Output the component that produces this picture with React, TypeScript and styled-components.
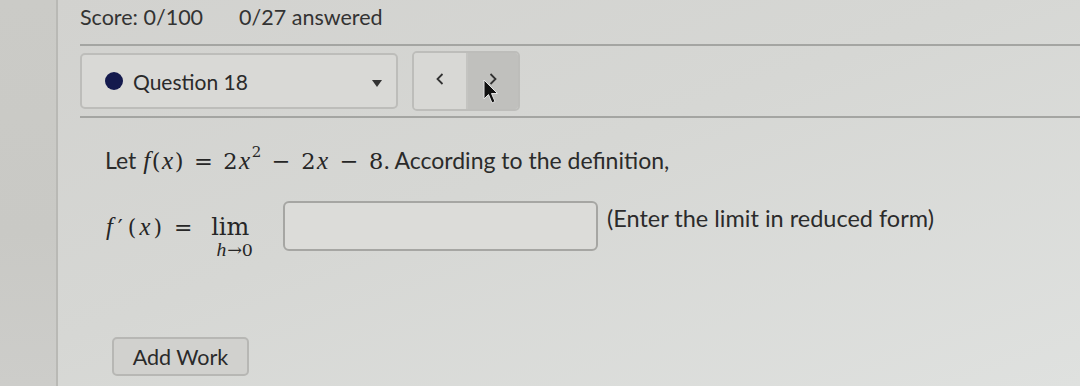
import styled, { createGlobalStyle } from 'styled-components'

const GlobalStyle = createGlobalStyle`
  html, body {
    margin: 0;
    padding: 0;
    height: 100%;
  }
  body {
    font-family: Lato, 'Open Sans', sans-serif;
    color: #2b2b2b;
    background: #c7c7c3;
    overflow: hidden;
  }
  #root {
    height: 100%;
  }
`

const Page = styled.div`
  display: flex;
  width: 1080px;
  height: 386px;
`

const Rail = styled.div`
  width: 56px;
  flex-shrink: 0;
  background: linear-gradient(180deg, #cbcbc7 0%, #c9c9c5 60%, #cdcdca 100%);
  border-right: 2px solid #b9b9b5;
`

const Main = styled.main`
  position: relative;
  flex: 1;
  padding: 4px 0 0 22px;
  background: linear-gradient(160deg, #d2d2cf 0%, #d6d7d4 45%, #dfe1df 100%);
`

const ScoreBar = styled.div`
  display: flex;
  gap: 36px;
  font-size: 21.5px;
  line-height: 26px;
  color: #333;
`

const Rule = styled.hr<{ $top: number }>`
  margin: ${(p) => p.$top}px 0 0;
  border: 0;
  border-top: 2px solid #a4a5a2;
  height: 0;
`

const NavRow = styled.div`
  display: flex;
  align-items: center;
  gap: 14px;
  margin-top: 5px;
`

const Select = styled.div`
  display: flex;
  align-items: center;
  box-sizing: border-box;
  width: 318px;
  height: 56px;
  padding: 0 14px 0 23px;
  border: 2px solid #bdbdba;
  border-radius: 5px;
  background: #d9d9d6;
  font-size: 21px;
`

const Dot = styled.span`
  width: 18px;
  height: 18px;
  border-radius: 50%;
  background: #141a4d;
  margin-right: 10px;
`

const SelectLabel = styled.span`
  flex: 1;
  color: #2a2a2a;
`

const Caret = styled.span`
  width: 0;
  height: 0;
  border-left: 5px solid transparent;
  border-right: 5px solid transparent;
  border-top: 7px solid #333;
  margin-top: 4px;
`

const NavGroup = styled.div`
  display: flex;
  height: 56px;
  border: 2px solid #bdbdba;
  border-radius: 5px;
  overflow: hidden;
`

const NavButton = styled.button<{ $hover?: boolean }>`
  width: 52px;
  height: 100%;
  border: 0;
  padding: 0 0 4px;
  display: flex;
  align-items: center;
  justify-content: center;
  background: ${(p) => (p.$hover ? '#c0c0bd' : '#d8d8d5')};
  & + & {
    border-left: 2px solid #c4c4c1;
  }
`

const Question = styled.section`
  padding: 26px 0 0 25px;
  font-size: 23px;
`

const Line = styled.p`
  margin: 0;
  line-height: 32px;
  display: flex;
  align-items: baseline;
  white-space: pre;
`

const Math = styled.span`
  font-family: 'DejaVu Serif', 'Liberation Serif', serif;
  font-size: 22.5px;
  letter-spacing: 0.5px;
  color: #262626;
`

const V = styled.i`
  font-family: 'Liberation Serif', serif;
  font-style: italic;
  font-size: 1.12em;
  margin: 0 1px;
`

const Op = styled.span`
  margin: 0 10px;
`

const Sup = styled.sup`
  font-size: 15px;
  line-height: 0;
  vertical-align: 12px;
`

const AnswerRow = styled.div`
  display: flex;
  align-items: flex-start;
  margin-top: 24px;
`

const Derivative = styled.div`
  display: flex;
  align-items: baseline;
  padding-top: 12px;
  font-family: 'DejaVu Serif', 'Liberation Serif', serif;
  font-size: 22px;
  letter-spacing: 2px;
  color: #262626;
`

const Prime = styled.span`
  margin: 0 3px 0 2px;
`

const Limit = styled.span`
  display: inline-flex;
  flex-direction: column;
  align-items: center;
  margin-left: 3px;
  margin-right: 30px;
  font-size: 24px;
  line-height: 22px;
  letter-spacing: 0;
`

const LimitSub = styled.span`
  font-size: 17.5px;
  line-height: 23px;
  padding-left: 8px;
`

const AnswerInput = styled.input`
  box-sizing: border-box;
  width: 315px;
  height: 50px;
  border: 2px solid #a6a6a3;
  border-radius: 6px;
  background: #dcdcd9;
  outline: none;
`

const Hint = styled.span`
  margin-left: 9px;
  padding-top: 3px;
  font-size: 23.5px;
`

const AddWork = styled.button`
  margin: 75px 0 0 7px;
  box-sizing: border-box;
  width: 137px;
  height: 39px;
  border: 2px solid #b7b7b4;
  border-radius: 5px;
  background: #d1d1ce;
  font-family: Lato, 'Open Sans', sans-serif;
  font-size: 21.5px;
  color: #2a2a2a;
`

const Pointer = styled.svg`
  position: absolute;
  left: 425px;
  top: 79px;
`

function Chevron({ dir }: { dir: 'left' | 'right' }) {
  return (
    <svg width="12" height="16" viewBox="0 0 12 16">
      <path
        d={dir === 'left' ? 'M8.5 3 L3.5 8 L8.5 13' : 'M3.5 3 L8.5 8 L3.5 13'}
        fill="none"
        stroke="#333"
        strokeWidth="1.8"
      />
    </svg>
  )
}

export default function App() {
  return (
    <>
      <GlobalStyle />
      <Page>
        <Rail />
        <Main>
          <ScoreBar>
            <span>Score: 0/100</span>
            <span>0/27 answered</span>
          </ScoreBar>
          <Rule $top={14} />

          <NavRow>
            <Select>
              <Dot />
              <SelectLabel>Question 18</SelectLabel>
              <Caret />
            </Select>
            <NavGroup>
              <NavButton aria-label="Previous question">
                <Chevron dir="left" />
              </NavButton>
              <NavButton $hover aria-label="Next question">
                <Chevron dir="right" />
              </NavButton>
            </NavGroup>
          </NavRow>
          <Rule $top={5} />

          <Question>
            <Line>
              {'Let '}
              <Math>
                <V>f</V>(<V>x</V>)<Op>=</Op>2<V>x</V>
                <Sup>2</Sup>
                <Op>−</Op>2<V>x</V>
                <Op>−</Op>8
              </Math>
              {'. According to the definition,'}
            </Line>

            <AnswerRow>
              <Derivative>
                <V>f</V>
                <Prime>′</Prime>(<V>x</V>)<Op>=</Op>
                <Limit>
                  lim
                  <LimitSub>
                    <V>h</V>→0
                  </LimitSub>
                </Limit>
              </Derivative>
              <AnswerInput aria-label="answer" />
              <Hint>(Enter the limit in reduced form)</Hint>
            </AnswerRow>

            <AddWork>Add Work</AddWork>
          </Question>

          <Pointer width="16" height="26" viewBox="0 0 16 26">
            <path
              d="M1 1 L1 20 L5.5 15.5 L9 24 L12 22.5 L8.5 14.5 L14.5 14.5 Z"
              fill="#111"
              stroke="#e5e5e5"
              strokeWidth="1"
            />
          </Pointer>
        </Main>
      </Page>
    </>
  )
}
